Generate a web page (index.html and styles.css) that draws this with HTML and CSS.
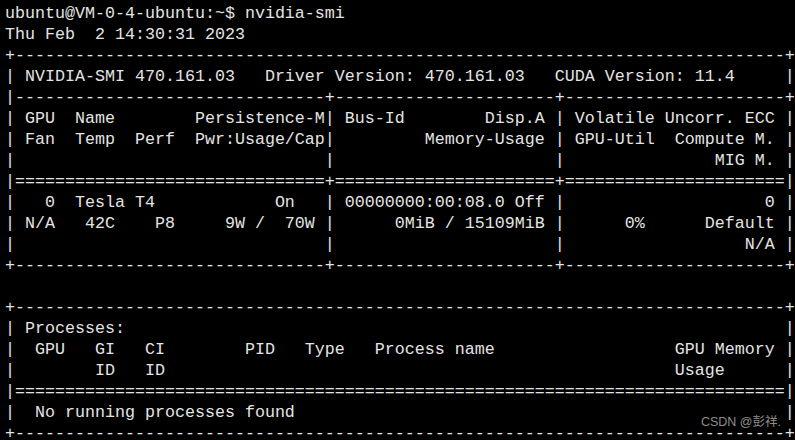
FILE: index.html
```html
<!DOCTYPE html>
<html lang="zh-CN">
 <head>
 <meta charset="UTF-8">
 <title>nvidia-smi</title>
 <link rel="stylesheet" href="styles.css">
 </head>
 <body>
 <div class="term">
<pre class="out">ubuntu@VM-0-4-ubuntu:~$ nvidia-smi
Thu Feb  2 14:30:31 2023
+-----------------------------------------------------------------------------+
| NVIDIA-SMI 470.161.03   Driver Version: 470.161.03   CUDA Version: 11.4     |
|-------------------------------+----------------------+----------------------+
| GPU  Name        Persistence-M| Bus-Id        Disp.A | Volatile Uncorr. ECC |
| Fan  Temp  Perf  Pwr:Usage/Cap|         Memory-Usage | GPU-Util  Compute M. |
|                               |                      |               MIG M. |
|===============================+======================+======================|
|   0  Tesla T4            On   | 00000000:00:08.0 Off |                    0 |
| N/A   42C    P8     9W /  70W |      0MiB / 15109MiB |      0%      Default |
|                               |                      |                  N/A |
+-------------------------------+----------------------+----------------------+

+-----------------------------------------------------------------------------+
| Processes:                                                                  |
|  GPU   GI   CI        PID   Type   Process name                  GPU Memory |
|        ID   ID                                                   Usage      |
|=============================================================================|
|  No running processes found                                                 |
+-----------------------------------------------------------------------------+</pre>
  <span class="mark">CSDN @彭祥.</span>
 </div>
 </body>
</html>
```

FILE: styles.css
```css
* {
margin: 0;
padding: 0;
}

html,
body {
width: 100%;
height: 100%;
background: #000;
overflow: hidden;
}

.term {
position: relative;
height: 440px;
padding: 3px 0 0 5px;
}

.out {
font-family: "Liberation Mono", monospace;
font-size: 16.66px;
line-height: 21px;
color: #e4e4e4;
white-space: pre;
}

/* watermark sits over the last table rows */
.mark {
position: absolute;
right: 14px;
top: 411px;
font-family: "Liberation Sans", "Noto Sans CJK SC", sans-serif;
font-size: 12.5px;
color: #8e8e8e;
}
```
